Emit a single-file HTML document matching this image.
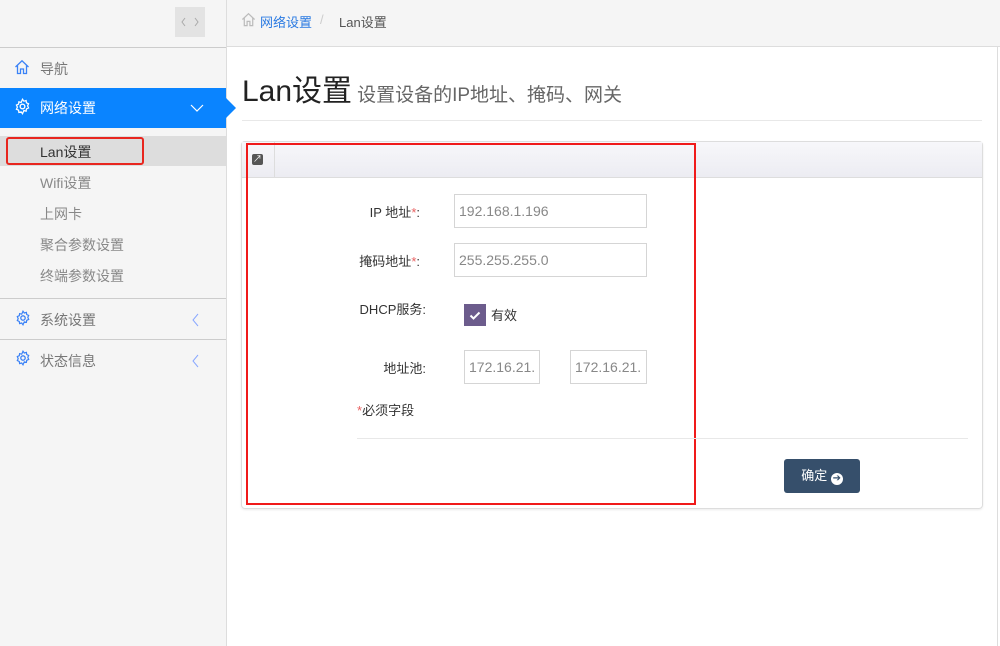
<!DOCTYPE html>
<html><head><meta charset="utf-8"><style>
*{box-sizing:border-box;margin:0;padding:0}
body{width:1000px;height:646px;overflow:hidden;background:#fff;font-family:"Liberation Sans","Noto Sans CJK SC",sans-serif;font-size:13px;color:#333;position:relative}
.abs{position:absolute}
#side{left:0;top:0;width:227px;height:646px;background:#f5f5f5;border-right:1px solid #ddd}
.t{position:absolute;white-space:nowrap}
.inp{position:absolute;border:1px solid #d5d5d5;background:#fff;color:#888;font-size:14px;padding-left:4px;line-height:32px;overflow:hidden;white-space:nowrap}
.lbl{position:absolute;right:580px;font-size:13px;color:#333;white-space:nowrap}
.star{color:#e86060}
</style></head><body>
<div id="side" class="abs">
 <div class="abs" style="left:0;top:47px;width:226px;height:1px;background:#ccc"></div>
 <div class="abs" style="left:175px;top:7px;width:30px;height:30px;background:#e3e3e3"></div>
 <svg class="abs" style="left:175px;top:7px" width="30" height="30"><path d="M10 11l-3 4 3 4M20 11l3 4-3 4" fill="none" stroke="#aaa" stroke-width="1"/></svg>
 <svg class="abs" style="left:14px;top:59px" width="16" height="16" viewBox="0 0 16 16"><path d="M1.5 8 L8 1.8 L14.5 8 M3.5 6.5 V14.5 H6.5 V10 H9.5 V14.5 H12.5 V6.5" fill="none" stroke="#3b82f6" stroke-width="1.3"/></svg>
 <div class="t" style="left:40px;top:59px;color:#777;font-size:14px">导航</div>
 <div class="abs" style="left:0;top:88px;width:226px;height:40px;background:#0a84ff"></div>
 <div class="abs" style="left:226px;top:98px;width:0;height:0;border-top:10px solid transparent;border-bottom:10px solid transparent;border-left:10px solid #0a84ff"></div>
 <svg class="abs" style="left:14px;top:98px" width="17" height="17" viewBox="0 0 16 16"><circle cx="8" cy="8" r="2.2" fill="none" stroke="#fff" stroke-width="1.3"/><path d="M8 1.2l1.3 1.8 2.1-.6.3 2.1 2 .9-.9 2 .9 2-2 .9-.3 2.1-2.1-.6L8 14.8l-1.3-1.8-2.1.6-.3-2.1-2-.9.9-2-.9-2 2-.9.3-2.1 2.1.6z" fill="none" stroke="#fff" stroke-width="1.2"/></svg>
 <div class="t" style="left:40px;top:98px;color:#fff;font-size:14px">网络设置</div>
 <svg class="abs" style="left:190px;top:103px" width="14" height="10"><path d="M1 2l6 6 6-6" fill="none" stroke="#fff" stroke-width="1.2"/></svg>
 <div class="abs" style="left:0;top:136px;width:226px;height:30px;background:#ddd"></div>
 <div class="abs" style="left:6px;top:137px;width:138px;height:28px;border:2px solid #e8261f;border-radius:3px"></div>
 <div class="t" style="left:40px;top:142px;font-size:14px;color:#333">Lan设置</div>
 <div class="t" style="left:40px;top:173px;font-size:14px;color:#888">Wifi设置</div>
 <div class="t" style="left:40px;top:204px;font-size:14px;color:#888">上网卡</div>
 <div class="t" style="left:40px;top:235px;font-size:14px;color:#888">聚合参数设置</div>
 <div class="t" style="left:40px;top:266px;font-size:14px;color:#888">终端参数设置</div>
 <div class="abs" style="left:0;top:298px;width:226px;height:1px;background:#ccc"></div>
 <svg class="abs" style="left:15px;top:310px" width="16" height="16" viewBox="0 0 16 16"><circle cx="8" cy="8" r="2.2" fill="none" stroke="#3b82f6" stroke-width="1.3"/><path d="M8 1.2l1.3 1.8 2.1-.6.3 2.1 2 .9-.9 2 .9 2-2 .9-.3 2.1-2.1-.6L8 14.8l-1.3-1.8-2.1.6-.3-2.1-2-.9.9-2-.9-2 2-.9.3-2.1 2.1.6z" fill="none" stroke="#3b82f6" stroke-width="1.2"/></svg>
 <div class="t" style="left:40px;top:310px;font-size:14px;color:#777">系统设置</div>
 <svg class="abs" style="left:192px;top:313px" width="8" height="14"><path d="M6 1l-5 6 5 6" fill="none" stroke="#8aa8ff" stroke-width="1"/></svg>
 <div class="abs" style="left:0;top:339px;width:226px;height:1px;background:#ccc"></div>
 <svg class="abs" style="left:15px;top:350px" width="16" height="16" viewBox="0 0 16 16"><circle cx="8" cy="8" r="2.2" fill="none" stroke="#3b82f6" stroke-width="1.3"/><path d="M8 1.2l1.3 1.8 2.1-.6.3 2.1 2 .9-.9 2 .9 2-2 .9-.3 2.1-2.1-.6L8 14.8l-1.3-1.8-2.1.6-.3-2.1-2-.9.9-2-.9-2 2-.9.3-2.1 2.1.6z" fill="none" stroke="#3b82f6" stroke-width="1.2"/></svg>
 <div class="t" style="left:40px;top:351px;font-size:14px;color:#777">状态信息</div>
 <svg class="abs" style="left:192px;top:354px" width="8" height="14"><path d="M6 1l-5 6 5 6" fill="none" stroke="#8aa8ff" stroke-width="1"/></svg>
</div>
<div class="abs" style="left:227px;top:0;width:773px;height:47px;background:#f5f5f5;border-bottom:1px solid #ddd"></div>
<svg class="abs" style="left:241px;top:12px" width="15" height="15" viewBox="0 0 16 16"><path d="M1.5 8 L8 1.8 L14.5 8 M3.5 6.5 V14.5 H6.5 V10 H9.5 V14.5 H12.5 V6.5" fill="none" stroke="#bbb" stroke-width="1.3"/></svg>
<div class="t" style="left:260px;top:12px;color:#2a7ae2;font-size:13px">网络设置</div>
<div class="t" style="left:320px;top:12px;color:#ccc;font-size:13px">/</div>
<div class="t" style="left:339px;top:12px;color:#555;font-size:13px">Lan设置</div>
<div class="abs" style="left:997px;top:47px;width:1px;height:599px;background:#ddd"></div>
<div class="t" style="left:242px;top:66px;font-size:30px;color:#222">Lan设置<span style="font-size:19px;color:#666;margin-left:5px">设置设备的IP地址、掩码、网关</span></div>
<div class="abs" style="left:242px;top:120px;width:740px;height:1px;background:#e8e8e8"></div>
<div class="abs" style="left:241px;top:141px;width:742px;height:368px;border:1px solid #ddd;border-radius:4px;box-shadow:0 1px 2px rgba(0,0,0,.08)"></div>
<div class="abs" style="left:242px;top:142px;width:740px;height:36px;background:linear-gradient(#f7f7fa,#ececf2);border-bottom:1px solid #ddd"></div>
<div class="abs" style="left:274px;top:142px;width:1px;height:36px;background:#ddd"></div>
<div class="abs" style="left:252px;top:154px;width:11px;height:11px;background:#555;border-radius:2px;color:#fff;font-size:9px;line-height:11px;text-align:center">↗</div>
<div class="abs" style="left:246px;top:143px;width:450px;height:362px;border:2px solid #f01a1a"></div>
<div class="lbl" style="top:202px">IP 地址<span class="star">*</span>:</div>
<div class="inp" style="left:454px;top:194px;width:193px;height:34px">192.168.1.196</div>
<div class="lbl" style="top:251px">掩码地址<span class="star">*</span>:</div>
<div class="inp" style="left:454px;top:243px;width:193px;height:34px">255.255.255.0</div>
<div class="lbl" style="top:299px;right:574px">DHCP服务:</div>
<div class="abs" style="left:464px;top:304px;width:22px;height:22px;background:#6c5c8c"></div>
<svg class="abs" style="left:464px;top:304px" width="22" height="22"><path d="M6.5 11.5l3 3 6-6" fill="none" stroke="#fff" stroke-width="2"/></svg>
<div class="t" style="left:491px;top:305px;font-size:13px">有效</div>
<div class="lbl" style="top:358px;right:574px">地址池:</div>
<div class="inp" style="left:464px;top:350px;width:76px;height:34px">172.16.21.</div>
<div class="inp" style="left:570px;top:350px;width:77px;height:34px">172.16.21.</div>
<div class="t" style="left:357px;top:400px;font-size:13px"><span class="star">*</span>必须字段</div>
<div class="abs" style="left:357px;top:438px;width:611px;height:1px;background:#e8e8e8"></div>
<div class="abs" style="left:784px;top:459px;width:76px;height:34px;background:#364f6b;border-radius:3px;color:#fff;font-size:13px;line-height:34px;text-align:center">确定 <span style="display:inline-block;width:12px;height:12px;border-radius:50%;background:#fff;color:#364f6b;font-size:10px;line-height:12px;vertical-align:-1px">➔</span></div>
</body></html>
